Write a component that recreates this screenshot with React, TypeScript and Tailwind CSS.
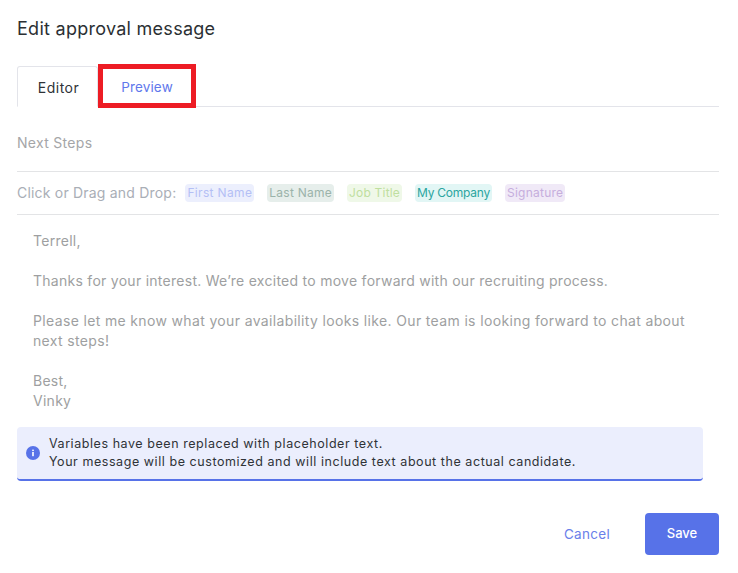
import React from 'react';

const variables = [
  { label: 'First Name', className: 'bg-[#eceffd] text-[#b4bff5] tracking-[0.35px]' },
  { label: 'Last Name', className: 'bg-[#e6eeeb] text-[#9bb3aa] tracking-[0.25px]' },
  { label: 'Job Title', className: 'bg-[#eff8e8] text-[#bfdf9f] tracking-[0.2px]' },
  { label: 'My Company', className: 'bg-[#e2f6f5] text-[#2ba5a0] tracking-[-0.25px]' },
  { label: 'Signature', className: 'bg-[#f0e9f7] text-[#c6aedd] tracking-[0.25px]' },
];

export default function App() {
  return (
    <div className="w-[738px] h-[573px] bg-white pl-[17px] pr-[19px] overflow-hidden font-['Inter',sans-serif]">
      {/* Title */}
      <h1 className="h-[66px] pt-[18px] text-[18px] leading-[22px] tracking-[0.27px] text-[#2b2f33]">Edit approval message</h1>

      {/* Tabs */}
      <div className="flex h-[41px] border-b border-[#e3e4ea]">
        <div className="w-[81px] h-[41px] pt-[1px] pl-[2px] flex items-center justify-center border border-b-white border-[#e3e4ea] rounded-t-[3px] text-[14px] tracking-[0.5px] text-[#2f3337]">
          Editor
        </div>
        <div className="relative w-[98px] h-[40px] pt-[2px] flex items-center justify-center text-[13.5px] tracking-[0.15px] text-[#5f78ec]">
          Preview
          <div className="absolute left-0 top-[-2px] w-[98px] h-[44px] border-[5px] border-[#ed1c24]" />
        </div>
      </div>

      {/* Subject */}
      <div className="h-[65px] pt-[26px] border-b border-[#e3e4e6] text-[14px] leading-[20px] tracking-[0.3px] text-[#a5a6a8]">Next Steps</div>

      {/* Variables */}
      <div className="flex items-center h-[43px] border-b border-[#e3e4e6] text-[14px] tracking-[0.2px] text-[#a9aeb6]">
        <span className="mr-[9px] -mt-[1px]">Click or Drag and Drop:</span>
        <div className="flex gap-[13px]">
          {variables.map((v) => (
            <span key={v.label} className={`h-[18px] px-[2px] rounded-[4px] text-[12px] leading-[18px] ${v.className}`}>
              {v.label}
            </span>
          ))}
        </div>
      </div>

      {/* Message */}
      <div className="pl-[16px] pr-[20px] pt-[16px] h-[212px] text-[14px] leading-[20px] tracking-[0.27px] text-[#9e9fa1]">
        <p>Terrell,</p>
        <p className="mt-[20px]">Thanks for your interest. We’re excited to move forward with our recruiting process.</p>
        <p className="mt-[20px] tracking-[0.35px]">Please let me know what your availability looks like. Our team is looking forward to chat about next steps!</p>
        <p className="mt-[20px]">Best,</p>
        <p>Vinky</p>
      </div>

      {/* Notice */}
      <div className="flex items-center w-[686px] h-[54px] bg-[#ebeefd] border-b-2 border-[#5772e8] rounded-[4px] pl-[9px]">
        <svg width="14" height="14" viewBox="0 0 14 14" className="shrink-0">
          <circle cx="7" cy="7" r="7" fill="#5772e8" />
          <rect x="6.2" y="6" width="1.6" height="4.2" fill="#fff" />
          <rect x="6.2" y="3.6" width="1.6" height="1.5" fill="#fff" />
        </svg>
        <div className="ml-[9px] text-[12.5px] leading-[18px] tracking-[0.56px] text-[#2f3337]">
          <p>Variables have been replaced with placeholder text.</p>
          <p>Your message will be customized and will include text about the actual candidate.</p>
        </div>
      </div>

      {/* Actions */}
      <div className="flex justify-end items-center mt-[32px]">
        <button className="mr-[35px] text-[13.5px] tracking-[0.3px] text-[#6a80ea]">Cancel</button>
        <button className="w-[74px] h-[42px] rounded-[4px] bg-[#5772e8] text-white text-[13px] font-medium">Save</button>
      </div>
    </div>
  );
}
